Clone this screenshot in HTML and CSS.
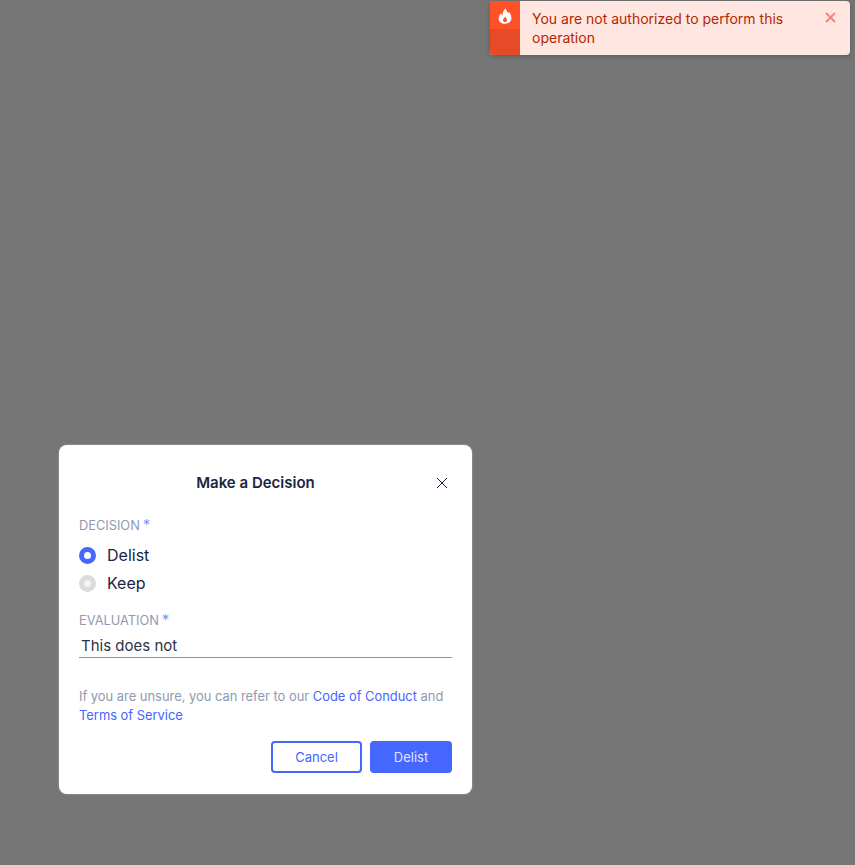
FILE: index.html
```html
<!DOCTYPE html>
<html lang="en">
<head>
<meta charset="utf-8">
<title>Make a Decision</title>
<link rel="stylesheet" href="styles.css">
</head>
<body>
<div class="toast">
  <div class="toast-side">
    <div class="toast-icon">
      <svg width="14" height="16" viewBox="0 0 14 16"><path fill="#fff" fill-rule="evenodd" d="M7.600 0.300C8 2.800 9.300 3.700 10.300 5 10.700 4.700 10.900 4.200 11 3.700 12.500 5.400 13.400 7.800 13.400 10.200 13.400 13.500 10.600 15.800 7 15.800 3.400 15.800 0.600 13.500 0.600 10.400 0.600 8.300 1.700 6.400 3.300 4.900 3.500 6.100 3.900 6.900 4.700 7.400 4.600 4.700 5.400 2.100 7.600 0.300ZM7.200 8.600C6.900 9.900 5 10.500 5 12.300 5 13.400 5.900 14.100 7 14.100 8.100 14.100 9 13.400 9 12.300 9 10.600 7.700 10 7.200 8.600Z"/></svg>
    </div>
  </div>
  <p class="toast-text">You are not authorized to perform this operation</p>
  <button class="toast-close" aria-label="Close">
    <svg width="11" height="11" viewBox="0 0 11 11"><path d="M1 1L10 10M10 1L1 10" stroke="#e58a7c" stroke-width="1.800" fill="none"/></svg>
  </button>
</div>

<div class="modal">
  <header class="modal-head">
    <h2 class="modal-title">Make a Decision</h2>
    <button class="modal-close" aria-label="Close">
      <svg width="12" height="12" viewBox="0 0 12 12"><path d="M1 1L11 11M11 1L1 11" stroke="#1a2540" stroke-width="1" fill="none"/></svg>
    </button>
  </header>
  <div class="label">DECISION<span class="req">*</span></div>
  <div class="radios">
    <div class="radio-row"><span class="radio radio-on"></span><span>Delist</span></div>
    <div class="radio-row"><span class="radio radio-off"></span><span>Keep</span></div>
  </div>
  <div class="label label-eval">EVALUATION<span class="req">*</span></div>
  <div class="input">This does not</div>
  <p class="note">If you are unsure, you can refer to our <a href="#">Code of Conduct</a> and <a href="#">Terms of Service</a></p>
  <div class="actions">
    <button class="btn btn-outline">Cancel</button>
    <button class="btn btn-solid">Delist</button>
  </div>
</div>
</body>
</html>
```
FILE: styles.css
```css
* { box-sizing: border-box; }
html, body { margin: 0; height: 100%; }
body {
  background: #757575;
  font-family: Inter, "Liberation Sans", sans-serif;
  overflow: hidden;
}
button { font-family: inherit; padding: 0; background: none; border: 0; }

.toast {
  position: absolute;
  left: 490px;
  top: 1px;
  width: 360px;
  height: 54px;
  display: flex;
  background: #ffe6e1;
  border-radius: 4px;
  overflow: hidden;
  box-shadow: 0 1px 4px rgba(0,0,0,0.25);
}
.toast-side { width: 30px; background: #e54b27; flex: none; }
.toast-icon {
  height: 28px;
  background: #ff5027;
  display: flex;
  align-items: center;
  justify-content: center;
  padding-top: 2px;
}
.toast-text {
  margin: 0;
  padding: 8px 0 0 12px;
  width: 290px;
  font-size: 14px;
  line-height: 19px;
  color: #b52600;
}
.toast-close {
  position: absolute;
  right: 14px;
  top: 11px;
  width: 11px;
  height: 11px;
  display: flex;
}

.modal {
  position: absolute;
  left: 59px;
  top: 445px;
  width: 413px;
  height: 349px;
  background: #fff;
  border-radius: 8px;
  padding: 0 20px;
  color: #1a2540;
  box-shadow: 0 0 2px rgba(255,255,255,0.5);
}
.modal-head {
  height: 64px;
  display: flex;
  align-items: center;
  justify-content: center;
  position: relative;
  padding-top: 12px;
  padding-right: 20px;
  margin-bottom: 8px;
}
.modal-title { margin: 0; font-size: 15px; line-height: 20px; font-weight: 600; color: #1a2540; }
.modal-close {
  position: absolute;
  right: 4px;
  top: 32px;
  width: 12px;
  height: 12px;
  display: flex;
}
.label {
  font-size: 12.800px;
  line-height: 16px;
  color: #8f99b3;
  height: 16px;
}
.req { color: #7f97ff; margin-left: 3px; font-size: 15px; }
.radios { margin-top: 12px; display: flex; flex-direction: column; gap: 8px; }
.radio-row { display: flex; align-items: center; gap: 11px; font-size: 16px; line-height: 20px; height: 20px; }
.radio { width: 17px; height: 17px; border-radius: 50%; display: block; flex: none; }
.radio-on { border: 5px solid #4566ff; background: #fff; }
.radio-off { border: 5px solid #dcdcdc; background: #f4f4f4; }
.label-eval { margin-top: 19px; }
.input {
  margin-top: 8px;
  height: 22px;
  padding-left: 2px;
  font-size: 15px;
  line-height: 20px;
  color: #2a3347;
  border-bottom: 1px solid #8a93a8;
}
.note {
  margin: 29px 0 0;
  font-size: 12.900px;
  line-height: 19px;
  color: #8f99b3;
}
.note a { color: #4566ff; text-decoration: none; }
.actions { margin-top: 16px; display: flex; justify-content: flex-end; gap: 8px; }
.btn {
  height: 32px;
  border-radius: 4px;
  font-size: 13px;
  padding-bottom: 1px;
}
.btn-outline { width: 91px; border: 2px solid #4566ff; color: #4566ff; background: #fff; }
.btn-solid { width: 82px; background: #4566ff; color: #dfe5ff; }
```
